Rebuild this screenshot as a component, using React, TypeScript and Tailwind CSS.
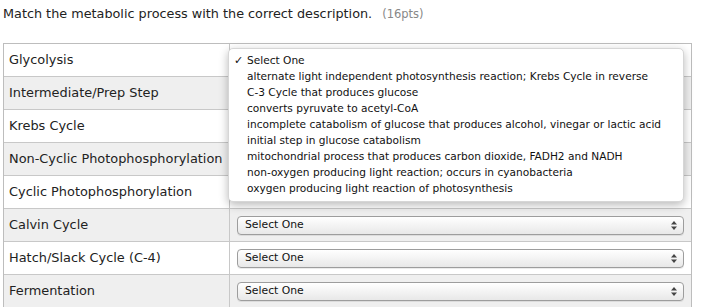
import React from "react";

const rows = [
  "Glycolysis",
  "Intermediate/Prep Step",
  "Krebs Cycle",
  "Non-Cyclic Photophosphorylation",
  "Cyclic Photophosphorylation",
  "Calvin Cycle",
  "Hatch/Slack Cycle (C-4)",
  "Fermentation",
];

const options = [
  "Select One",
  "alternate light independent photosynthesis reaction; Krebs Cycle in reverse",
  "C-3 Cycle that produces glucose",
  "converts pyruvate to acetyl-CoA",
  "incomplete catabolism of glucose that produces alcohol, vinegar or lactic acid",
  "initial step in glucose catabolism",
  "mitochondrial process that produces carbon dioxide, FADH2 and NADH",
  "non-oxygen producing light reaction; occurs in cyanobacteria",
  "oxygen producing light reaction of photosynthesis",
];

const SelectBox = () => (
  <div className="flex h-[19px] w-[447px] items-center justify-between rounded-[4px] border border-[#9d9d9d] bg-gradient-to-b from-[#ffffff] to-[#e8e8e8] pl-[7px] pr-[6px] text-[10.8px] text-[#111] shadow-[0_1px_0_rgba(0,0,0,0.08)]">
    <span>Select One</span>
    <svg width="6" height="9" viewBox="0 0 6 9">
      <path d="M0 3.5 L3 0 L6 3.5 Z" fill="#444" />
      <path d="M0 5.5 L3 9 L6 5.5 Z" fill="#444" />
    </svg>
  </div>
);

export default function App() {
  return (
    <div
      className="relative h-[307px] w-[722px] overflow-hidden bg-white text-[#222]"
      style={{ fontFamily: '"DejaVu Sans", Verdana, sans-serif' }}
    >
      <div className="pl-[3px] pt-[5px] text-[12.8px] leading-[18px]">
        Match the metabolic process with the correct description.
        <span className="ml-[10px] text-[11.5px] text-[#888]">(16pts)</span>
      </div>

      <div className="ml-[3px] mt-[20px] w-[689px] border-l border-r border-t border-[#bdbdbd]">
        {rows.map((label, i) => (
          <div
            key={label}
            className={`flex h-[33px] border-b border-[#c8c8c8] ${i % 2 === 1 ? "bg-[#efefef]" : "bg-white"}`}
          >
            <div className="flex w-[226px] items-center border-r border-[#c8c8c8] pl-[5px] text-[12.9px] text-[#222]">
              {label}
            </div>
            <div className="flex flex-1 items-center pl-[7px]">
              {i >= 5 && <SelectBox />}
            </div>
          </div>
        ))}
      </div>

      <div
        className="absolute left-[228px] top-[48px] w-[456px] rounded-[5px] border border-[#d6d6d6] bg-white py-[4px] shadow-[0_3px_10px_rgba(0,0,0,0.28)]"
        style={{ fontFamily: '"DejaVu Sans", "Lucida Grande", sans-serif' }}
      >
        {options.map((o, i) => (
          <div key={o} className="flex h-[16px] items-center text-[10.6px] text-[#111]">
            <span className="w-[18px] pl-[5px] text-[11px]">{i === 0 ? "✓" : ""}</span>
            <span>{o}</span>
          </div>
        ))}
      </div>
    </div>
  );
}
